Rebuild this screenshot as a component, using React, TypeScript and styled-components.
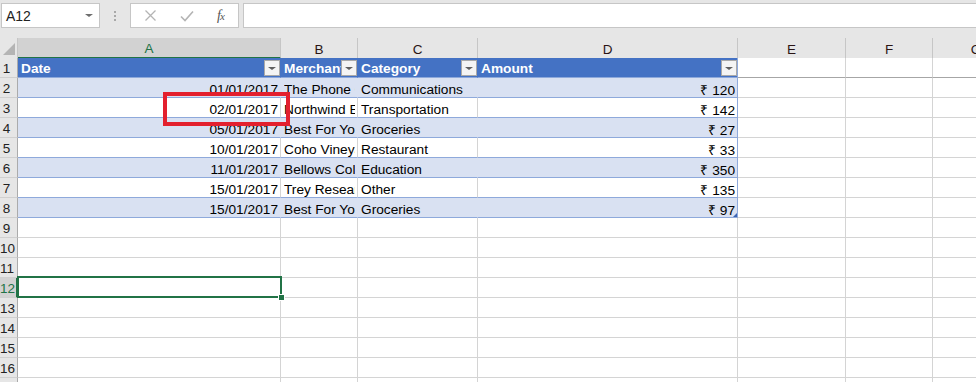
import React from 'react';
import styled, { createGlobalStyle, css } from 'styled-components';

const GlobalStyle = createGlobalStyle`
  html, body {
    margin: 0;
    padding: 0;
    background: #ffffff;
    overflow: hidden;
  }
  body {
    font-family: 'Liberation Sans', Arial, sans-serif;
  }
`;

type Tone = 'head' | 'band' | 'plain' | 'grid';

const tones: Record<Tone, { bg: string; right: string; bottom: string }> = {
  head: { bg: '#4472c4', right: '#4472c4', bottom: '#8ea9db' },
  band: { bg: '#d9e1f2', right: '#d9e1f2', bottom: '#8ea9db' },
  plain: { bg: '#ffffff', right: '#d4d4d4', bottom: '#8ea9db' },
  grid: { bg: '#ffffff', right: '#d4d4d4', bottom: '#d4d4d4' },
};

const Page = styled.div`
  position: relative;
  width: 976px;
  height: 382px;
  overflow: hidden;
  background: #ffffff;
`;

const FormulaBar = styled.div`
  height: 38px;
  box-sizing: border-box;
  padding: 3px 0 0 1px;
  background: #e6e6e6;
  display: flex;
  align-items: flex-start;
`;

const NameBox = styled.div`
  width: 99px;
  height: 25px;
  box-sizing: border-box;
  border: 1px solid #c6c6c6;
  background: #ffffff;
  display: flex;
  align-items: center;
  justify-content: space-between;
  padding: 0 6px 0 4px;
  font-size: 14px;
  color: #222;
`;

const Caret = styled.span<{ $size?: number; $color?: string }>`
  width: 0;
  height: 0;
  border-left: ${(p) => p.$size ?? 4}px solid transparent;
  border-right: ${(p) => p.$size ?? 4}px solid transparent;
  border-top: ${(p) => (p.$size ?? 4) - 0.5}px solid ${(p) => p.$color ?? '#6d6d6d'};
`;

const Grip = styled.div`
  width: 30px;
  height: 25px;
  display: flex;
  flex-direction: column;
  align-items: center;
  justify-content: center;
  gap: 2px;
  span {
    width: 2px;
    height: 2px;
    background: #a8a8a8;
  }
`;

const FxBox = styled.div`
  width: 109px;
  height: 25px;
  box-sizing: border-box;
  border: 1px solid #c6c6c6;
  background: #ffffff;
  display: flex;
  align-items: center;
  padding-left: 13px;
  gap: 23px;
`;

const Fx = styled.span`
  font-family: 'Liberation Serif', 'Times New Roman', serif;
  font-style: italic;
  font-size: 14px;
  color: #555;
  letter-spacing: -1px;
  small {
    font-size: 11px;
  }
`;

const FormulaInput = styled.div`
  flex: 1;
  margin-left: 4px;
  height: 25px;
  box-sizing: border-box;
  border: 1px solid #c6c6c6;
  border-right: none;
  background: #ffffff;
`;

const Sheet = styled.div`
  display: grid;
  width: 1020px;
  grid-template-columns: 18px 263px 77px 120px 260px 108px 87px 87px;
  grid-auto-rows: 20px;
  font-size: 13.7px;
`;

const Corner = styled.div`
  height: 21px;
  box-sizing: border-box;
  background: #e6e6e6;
  border-right: 1px solid #c6c6c6;
  border-bottom: 1px solid #ababab;
  display: flex;
  align-items: flex-end;
  justify-content: flex-end;
  padding: 0 2px 3px 0;
`;

const ColHeader = styled.div<{ $active?: boolean }>`
  height: 21px;
  box-sizing: border-box;
  background: ${(p) => (p.$active ? '#d2d2d2' : '#e6e6e6')};
  border-right: 1px solid #c6c6c6;
  border-bottom: ${(p) => (p.$active ? '2px solid #217346' : '1px solid #ababab')};
  color: ${(p) => (p.$active ? '#217346' : '#2a1414')};
  font-size: 13.5px;
  display: flex;
  align-items: center;
  justify-content: center;
  padding-top: 2px;
`;

const RowHeader = styled.div<{ $active?: boolean }>`
  height: 20px;
  box-sizing: border-box;
  background: ${(p) => (p.$active ? '#d2d2d2' : '#e6e6e6')};
  border-right: ${(p) => (p.$active ? '2px solid #217346' : '1px solid #ababab')};
  border-bottom: 1px solid #d0d0d0;
  color: ${(p) => (p.$active ? '#217346' : '#222')};
  font-size: 13.5px;
  line-height: 18px;
  padding-top: 2px;
  text-align: center;
  padding-right: 4px;
  white-space: nowrap;
`;

const Cell = styled.div<{ $tone: Tone; $edge?: boolean; $align?: 'left' | 'right'; $frozen?: boolean }>`
  position: relative;
  height: 20px;
  box-sizing: border-box;
  display: flex;
  align-items: center;
  min-width: 0;
  padding: 3px 2px 0 3px;
  background: ${(p) => tones[p.$tone].bg};
  border-right: 1px solid ${(p) => (p.$edge ? '#8ea9db' : tones[p.$tone].right)};
  border-bottom: 1px solid ${(p) => (p.$frozen ? '#a6a6a6' : tones[p.$tone].bottom)};
  color: ${(p) => (p.$tone === 'head' ? '#ffffff' : '#000000')};
  font-weight: ${(p) => (p.$tone === 'head' ? 700 : 400)};
  justify-content: ${(p) => (p.$align === 'right' ? 'flex-end' : 'flex-start')};
  text-align: ${(p) => p.$align ?? 'left'};
  ${(p) =>
    p.$tone === 'head' &&
    css`
      padding: 1px 0 0 3px;
    `}
`;

const CellText = styled.span`
  flex: 1;
  min-width: 0;
  overflow: hidden;
  white-space: nowrap;
`;

const FilterButton = styled.span`
  flex-shrink: 0;
  width: 16px;
  height: 16px;
  box-sizing: border-box;
  border: 1px solid #a9a9a9;
  background: #f4f4f4;
  display: flex;
  align-items: center;
  justify-content: center;
`;

const Selection = styled.div`
  position: absolute;
  z-index: 5;
  top: -2px;
  left: -1px;
  right: -2px;
  bottom: -1px;
  border: 2px solid #217346;
  pointer-events: none;
`;

const FillHandle = styled.span`
  position: absolute;
  right: -5px;
  bottom: -5px;
  width: 5px;
  height: 5px;
  background: #217346;
  border: 1px solid #ffffff;
  box-sizing: content-box;
`;

const ResizeMark = styled.span`
  position: absolute;
  right: 0;
  bottom: 0;
  width: 0;
  height: 0;
  border-left: 4px solid transparent;
  border-bottom: 4px solid #3a64b4;
`;

const Annotation = styled.div`
  position: absolute;
  z-index: 10;
  left: 163px;
  top: 92px;
  width: 127px;
  height: 34px;
  box-sizing: border-box;
  border: 4px solid #e3202e;
  pointer-events: none;
`;

const columns = ['A', 'B', 'C', 'D', 'E', 'F', 'G'];
const headers = ['Date', 'Merchant', 'Category', 'Amount'];

const rows = [
  ['01/01/2017', 'The Phone Company', 'Communications', '₹ 120'],
  ['02/01/2017', 'Northwind Electric Cars', 'Transportation', '₹ 142'],
  ['05/01/2017', 'Best For You Organics Company', 'Groceries', '₹ 27'],
  ['10/01/2017', 'Coho Vineyard', 'Restaurant', '₹ 33'],
  ['11/01/2017', 'Bellows College', 'Education', '₹ 350'],
  ['15/01/2017', 'Trey Research', 'Other', '₹ 135'],
  ['15/01/2017', 'Best For You Organics Company', 'Groceries', '₹ 97'],
];

const ROW_COUNT = 17;
const ACTIVE_ROW = 12;

function CloseIcon() {
  return (
    <svg width="13" height="13" viewBox="0 0 13 13">
      <path d="M1.5 1.5 L11.5 11.5 M11.5 1.5 L1.5 11.5" stroke="#b4b4b4" strokeWidth="1.3" fill="none" />
    </svg>
  );
}

function CheckIcon() {
  return (
    <svg width="14" height="12" viewBox="0 0 14 12">
      <path d="M1 6.5 L5 10.5 L13 1.5" stroke="#b4b4b4" strokeWidth="1.6" fill="none" />
    </svg>
  );
}

function CornerTriangle() {
  return (
    <svg width="12" height="12" viewBox="0 0 12 12">
      <path d="M12 0 L12 12 L0 12 Z" fill="#b4b4b4" />
    </svg>
  );
}

function renderCell(r: number, c: number) {
  const inTable = r <= 8 && c <= 3;
  const key = `${r}-${c}`;
  if (!inTable) {
    return (
      <Cell key={key} $tone="grid" $frozen={r === 1}>
        {r === ACTIVE_ROW && c === 0 && (
          <Selection>
            <FillHandle />
          </Selection>
        )}
      </Cell>
    );
  }
  const edge = c === 3;
  if (r === 1) {
    return (
      <Cell key={key} $tone="head" $edge={edge}>
        <CellText>{headers[c]}</CellText>
        <FilterButton>
          <Caret $size={4} $color="#5f5f5f" />
        </FilterButton>
      </Cell>
    );
  }
  const tone: Tone = r % 2 === 0 ? 'band' : 'plain';
  const value = rows[r - 2][c];
  const right = c === 0 || c === 3;
  return (
    <Cell key={key} $tone={tone} $edge={edge} $align={right ? 'right' : 'left'}>
      <CellText>{value}</CellText>
      {r === 8 && c === 3 && <ResizeMark />}
    </Cell>
  );
}

export default function App() {
  return (
    <Page>
      <GlobalStyle />
      <FormulaBar>
        <NameBox>
          A12
          <Caret $size={4} />
        </NameBox>
        <Grip>
          <span />
          <span />
          <span />
        </Grip>
        <FxBox>
          <CloseIcon />
          <CheckIcon />
          <Fx>
            f<small>x</small>
          </Fx>
        </FxBox>
        <FormulaInput />
      </FormulaBar>
      <Sheet>
        <Corner>
          <CornerTriangle />
        </Corner>
        {columns.map((col) => (
          <ColHeader key={col} $active={col === 'A'}>
            {col}
          </ColHeader>
        ))}
        {Array.from({ length: ROW_COUNT }, (_, i) => i + 1).map((r) => (
          <React.Fragment key={r}>
            <RowHeader $active={r === ACTIVE_ROW}>{r}</RowHeader>
            {columns.map((_, c) => renderCell(r, c))}
          </React.Fragment>
        ))}
      </Sheet>
      <Annotation />
    </Page>
  );
}
